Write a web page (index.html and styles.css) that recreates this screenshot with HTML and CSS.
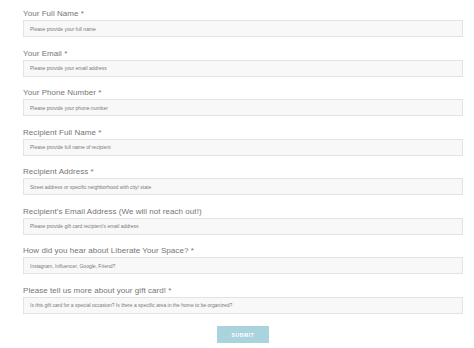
FILE: index.html
```html
<!DOCTYPE html>
<html lang="en">
<head>
<meta charset="utf-8">
<title>Gift Card Form</title>
<link rel="stylesheet" href="styles.css">
</head>
<body>
<form class="form">
  <div class="field">
    <label class="label">Your Full Name *</label>
    <input class="input" type="text" placeholder="Please provide your full name">
  </div>
  <div class="field">
    <label class="label">Your Email *</label>
    <input class="input" type="text" placeholder="Please provide your email address">
  </div>
  <div class="field">
    <label class="label">Your Phone Number *</label>
    <input class="input" type="text" placeholder="Please provide your phone number">
  </div>
  <div class="field">
    <label class="label">Recipient Full Name *</label>
    <input class="input" type="text" placeholder="Please provide full name of recipient">
  </div>
  <div class="field">
    <label class="label">Recipient Address *</label>
    <input class="input" type="text" placeholder="Street address or specific neighborhood with city/ state">
  </div>
  <div class="field">
    <label class="label">Recipient's Email Address (We will not reach out!)</label>
    <input class="input" type="text" placeholder="Please provide gift card recipient's email address">
  </div>
  <div class="field">
    <label class="label">How did you hear about Liberate Your Space? *</label>
    <input class="input" type="text" placeholder="Instagram, Influencer, Google, Friend?">
  </div>
  <div class="field">
    <label class="label">Please tell us more about your gift card! *</label>
    <input class="input" type="text" placeholder="Is this gift card for a special occasion? Is there a specific area in the home to be organized?">
  </div>
  <div class="actions">
    <button class="submit" type="button">SUBMIT</button>
  </div>
</form>
</body>
</html>
```
FILE: styles.css
```css
html, body {
  margin: 0;
  padding: 0;
  background: #ffffff;
}
body {
  font-family: "Liberation Sans", Arial, sans-serif;
}
.form {
  padding: 8px 11px 0 23px;
  display: flex;
  flex-direction: column;
}
.field {
  display: flex;
  flex-direction: column;
  margin-bottom: 10.57px;
}
.label {
  font-size: 8px;
  line-height: 12px;
  height: 12px;
  color: #757575;
  letter-spacing: 0.05px;
}
.input {
  box-sizing: border-box;
  height: 17px;
  width: 100%;
  margin: 0;
  padding: 0 6px;
  border: 1px solid #e3e3e3;
  background: #f8f8f8;
  font-family: "Liberation Sans", Arial, sans-serif;
  font-size: 5px;
  color: #666;
  outline: none;
}
.input::placeholder {
  color: #7a7a7a;
  opacity: 1;
}
.actions {
  display: flex;
  justify-content: center;
  padding-top: 1.5px;
}
.submit {
  width: 52px;
  height: 17px;
  border: none;
  padding: 0;
  background: #aad4dd;
  color: #ffffff;
  font-family: "Liberation Sans", Arial, sans-serif;
  font-weight: bold;
  font-size: 5px;
  letter-spacing: 0.6px;
}
```
